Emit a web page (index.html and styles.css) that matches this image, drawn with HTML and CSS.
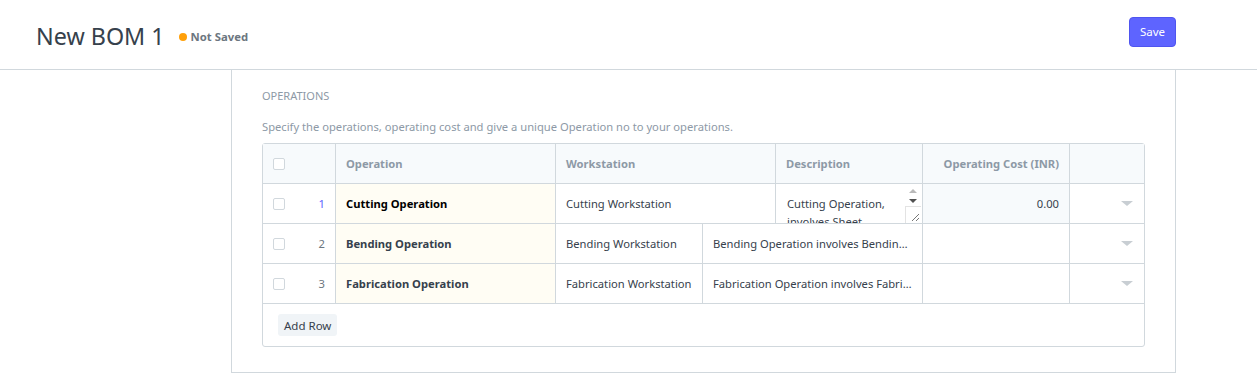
FILE: index.html
```html
<!DOCTYPE html>
<html lang="en">
<head>
    <meta charset="UTF-8">
    <title>New BOM 1</title>
    <link rel="stylesheet" href="styles.css">
</head>
<body>
    <header class="page-head">
        <div class="title-area">
            <h1>New BOM 1</h1>
            <span class="indicator"><span class="dot"></span>Not Saved</span>
        </div>
        <button class="btn-save">Save</button>
    </header>

    <main class="layout">
        <div class="form-page">
            <section class="form-section">
                <div class="section-label">Operations</div>
                <p class="help">Specify the operations, operating cost and give a unique Operation no to your operations.</p>

                <div class="grid">
                    <div class="grid-row grid-head">
                        <div class="col col-check"><span class="check"></span></div>
                        <div class="col col-op">Operation</div>
                        <div class="col col-wide">Workstation</div>
                        <div class="col col-narrow">Description</div>
                        <div class="col col-cost">Operating Cost (INR)</div>
                        <div class="col col-menu"></div>
                    </div>

                    <!-- row being edited -->
                    <div class="grid-row row-edit">
                        <div class="col col-check"><span class="check"></span><span class="idx">1</span></div>
                        <div class="col col-op">Cutting Operation</div>
                        <div class="col col-wide">Cutting Workstation</div>
                        <div class="col col-narrow desc-edit">
                            <div class="desc-text">Cutting Operation, involves Sheet Cutting</div>
                            <div class="scroller">
                                <span class="arrow-up"></span>
                                <span class="arrow-down"></span>
                                <span class="resize">
                                    <svg width="9" height="9" viewBox="0 0 9 9"><path d="M1 8 L8 1 M5 8 L8 5" stroke="#777" stroke-width="1" fill="none"/></svg>
                                </span>
                            </div>
                        </div>
                        <div class="col col-cost cost-edit">0.00</div>
                        <div class="col col-menu"><span class="caret"></span></div>
                    </div>

                    <div class="grid-row">
                        <div class="col col-check"><span class="check"></span><span class="idx">2</span></div>
                        <div class="col col-op">Bending Operation</div>
                        <div class="col col-narrow">Bending Workstation</div>
                        <div class="col col-wide ellipsis">Bending Operation involves Bending of sheets</div>
                        <div class="col col-cost"></div>
                        <div class="col col-menu"><span class="caret"></span></div>
                    </div>

                    <div class="grid-row">
                        <div class="col col-check"><span class="check"></span><span class="idx">3</span></div>
                        <div class="col col-op">Fabrication Operation</div>
                        <div class="col col-narrow">Fabrication Workstation</div>
                        <div class="col col-wide ellipsis">Fabrication Operation involves Fabrication of parts</div>
                        <div class="col col-cost"></div>
                        <div class="col col-menu"><span class="caret"></span></div>
                    </div>

                    <div class="grid-footer">
                        <button class="btn-add">Add Row</button>
                    </div>
                </div>
            </section>
        </div>
    </main>
</body>
</html>
```

FILE: styles.css
```css
body {
    margin: 0;
    font-family: "Segoe UI", "Noto Sans", sans-serif;
    font-size: 11.2px;
    color: #36414c;
    background-color: #fff;
}
.page-head {
    height: 69px;
    border-bottom: 1px solid #d1d8dd;
    display: flex;
    align-items: center;
    justify-content: space-between;
    padding: 0 81px 0 36px;
    box-sizing: content-box;
}
.title-area {
    display: flex;
    align-items: center;
    margin-top: 5px;
}
.page-head h1 {
    margin: 0;
    font-size: 23.3px;
    font-weight: 400;
    color: #36414c;
    line-height: 1;
}
.indicator {
    display: flex;
    align-items: center;
    margin-left: 14px;
    font-weight: 700;
    font-size: 11.3px;
    color: #6c7680;
}
.indicator .dot {
    width: 8px;
    height: 8px;
    border-radius: 50%;
    background-color: #ffa00a;
    margin-right: 4px;
}
.btn-save {
    width: 47px;
    height: 30px;
    padding: 0;
    margin-top: -6px;
    background-color: #5e64ff;
    color: #fff;
    border: 1px solid #4f55ef;
    border-radius: 4px;
    font-family: inherit;
    font-size: 11.5px;
}
.layout {
    padding-left: 231px;
}
.form-page {
    width: 943px;
    border-left: 1px solid #d1d8dd;
    border-right: 1px solid #d1d8dd;
    border-bottom: 1px solid #d1d8dd;
}
.form-section {
    padding: 18px 30px 25px 30px;
}
.section-label {
    font-size: 11px;
    text-transform: uppercase;
    color: #8d99a6;
    line-height: 16px;
}
.help {
    margin: 14px 0 7px 0;
    color: #8d99a6;
    line-height: 18px;
}
.grid {
    border: 1px solid #d1d8dd;
    border-radius: 3px;
}
.grid-row {
    display: flex;
    height: 39px;
    border-bottom: 1px solid #d1d8dd;
}
.grid-head {
    background-color: #f7fafc;
    font-weight: 700;
    color: #8d99a6;
}
.col {
    box-sizing: border-box;
    display: flex;
    align-items: center;
    padding: 0 10px;
    border-left: 1px solid #d1d8dd;
    white-space: nowrap;
    overflow: hidden;
}
.col-check {
    width: 72px;
    border-left: none;
    padding: 0 10px;
    justify-content: space-between;
}
.col-op {
    width: 220px;
}
.col-wide {
    width: 220px;
}
.col-narrow {
    width: 147px;
}
.col-cost {
    width: 147px;
    justify-content: flex-end;
}
.col-menu {
    flex: 1;
    justify-content: flex-end;
    padding-right: 11px;
}
.check {
    width: 10px;
    height: 10px;
    border: 1px solid #d1d8dd;
    border-radius: 2px;
    background-color: #fff;
}
.idx {
    color: #6c7680;
}
.grid-row:not(.grid-head) .col-op {
    background-color: #fffdf4;
    font-weight: 700;
}
.ellipsis {
    display: block;
    line-height: 39px;
    text-overflow: ellipsis;
}
.row-edit .idx {
    color: #5e64ff;
}
.row-edit .col-op {
    color: #000;
}
.cost-edit {
    background-color: #f7fafc;
}
.caret {
    width: 0;
    height: 0;
    border-left: 6px solid transparent;
    border-right: 6px solid transparent;
    border-top: 5px solid #c8ced3;
}
.desc-edit {
    align-items: stretch;
    padding: 0 0 0 11px;
}
.desc-text {
    flex: 1;
    white-space: normal;
    line-height: 18px;
    padding: 11px 8px 0 0;
    overflow: hidden;
}
.scroller {
    width: 16px;
    display: flex;
    flex-direction: column;
    align-items: center;
    margin-right: 1px;
}
.arrow-up,
.arrow-down {
    width: 0;
    height: 0;
    border-left: 4px solid transparent;
    border-right: 4px solid transparent;
}
.arrow-up {
    margin-top: 5px;
    border-bottom: 4px solid #b9b9b9;
}
.arrow-down {
    margin-top: 6px;
    border-top: 4px solid #505050;
}
.resize {
    margin-top: auto;
    width: 15px;
    height: 16px;
    border-left: 1px solid #e3e3e3;
    border-top: 1px solid #e3e3e3;
    display: flex;
    align-items: flex-end;
    justify-content: flex-end;
}
.resize svg {
    display: block;
    margin: 0 1px 1px 0;
}
.grid-footer {
    padding: 10px 15px 10px 15px;
    height: 22px;
}
.btn-add {
    height: 22px;
    padding: 0 6px;
    background-color: #f0f4f7;
    border: none;
    border-radius: 3px;
    color: #36414c;
    font-family: inherit;
    font-size: 11.5px;
}
```
